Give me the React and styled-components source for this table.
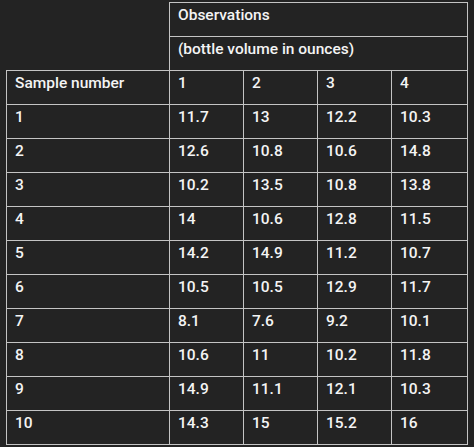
import React from "react";
import styled, { createGlobalStyle } from "styled-components";

const GlobalStyle = createGlobalStyle`
  html, body {
    margin: 0;
    padding: 0;
    background: #232323;
  }
  body {
    font-family: Roboto, "Liberation Sans", sans-serif;
  }
`;

const Page = styled.div`
  width: 474px;
  height: 447px;
  padding: 2px 0 0 6px;
  box-sizing: border-box;
  background: #232323;
`;

const Table = styled.table`
  border-collapse: collapse;
  table-layout: fixed;
  width: 461px;
`;

const Cell = styled.td`
  height: 34px;
  box-sizing: border-box;
  padding: 3px 8px 0;
  vertical-align: top;
  border: 1px solid #c4c4c4;
  color: #f4f4f4;
  font-size: 15.5px;
  font-weight: 500;
  line-height: 18px;
  white-space: nowrap;
`;

const Corner = styled(Cell)`
  border-top: none;
  border-left: none;
`;

const columns = [163, 74, 74, 74, 76];

const rows = [
  ["1", "11.7", "13", "12.2", "10.3"],
  ["2", "12.6", "10.8", "10.6", "14.8"],
  ["3", "10.2", "13.5", "10.8", "13.8"],
  ["4", "14", "10.6", "12.8", "11.5"],
  ["5", "14.2", "14.9", "11.2", "10.7"],
  ["6", "10.5", "10.5", "12.9", "11.7"],
  ["7", "8.1", "7.6", "9.2", "10.1"],
  ["8", "10.6", "11", "10.2", "11.8"],
  ["9", "14.9", "11.1", "12.1", "10.3"],
  ["10", "14.3", "15", "15.2", "16"],
];

export default function App() {
  return (
    <Page>
      <GlobalStyle />
      <Table>
        <colgroup>
          {columns.map((w, i) => (
            <col key={i} style={{ width: w }} />
          ))}
        </colgroup>
        <tbody>
          <tr>
            <Corner rowSpan={2} />
            <Cell colSpan={4}>Observations</Cell>
          </tr>
          <tr>
            <Cell colSpan={4}>(bottle volume in ounces)</Cell>
          </tr>
          <tr>
            <Cell>Sample number</Cell>
            <Cell>1</Cell>
            <Cell>2</Cell>
            <Cell>3</Cell>
            <Cell>4</Cell>
          </tr>
          {rows.map((r) => (
            <tr key={r[0]}>
              {r.map((v, i) => (
                <Cell key={i}>{v}</Cell>
              ))}
            </tr>
          ))}
        </tbody>
      </Table>
    </Page>
  );
}
